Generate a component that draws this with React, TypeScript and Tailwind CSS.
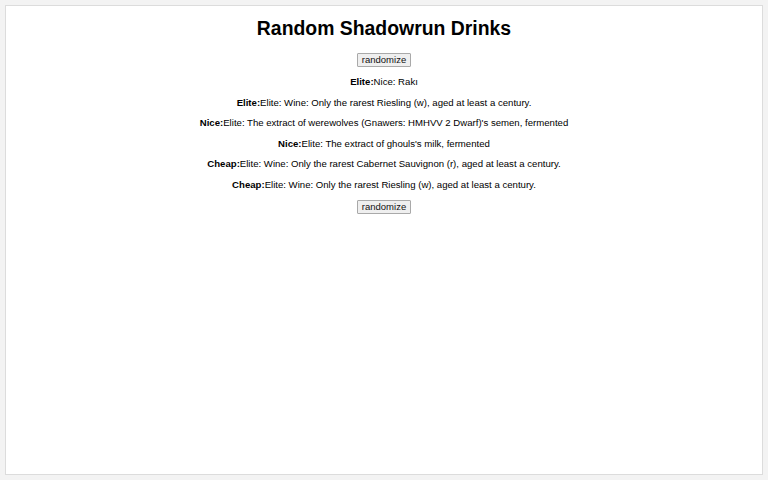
const drinks: [string, string][] = [
  ["Elite:", "Nice: Rakı"],
  ["Elite:", "Elite: Wine: Only the rarest Riesling (w), aged at least a century."],
  ["Nice:", "Elite: The extract of werewolves (Gnawers: HMHVV 2 Dwarf)'s semen, fermented"],
  ["Nice:", "Elite: The extract of ghouls's milk, fermented"],
  ["Cheap:", "Elite: Wine: Only the rarest Cabernet Sauvignon (r), aged at least a century."],
  ["Cheap:", "Elite: Wine: Only the rarest Riesling (w), aged at least a century."],
];

function RandomizeButton() {
  return (
    <button
      type="button"
      className="h-[14px] rounded-[1px] border border-[#a9a9a9] bg-[#efefef] px-[4px] text-[9.5px] leading-[12px] text-[#111]"
    >
      randomize
    </button>
  );
}

export default function App() {
  return (
    <div className="min-h-[480px] bg-[#f3f3f3] p-[5px] font-['Liberation_Sans',Arial,sans-serif] text-black">
      <div className="flex h-[470px] flex-col items-center border border-[#dcdcdc] bg-white">
        <h1 className="mt-[11px] text-[19.4px] font-bold leading-[22px]">Random Shadowrun Drinks</h1>
        <div className="mt-[14px] flex">
          <RandomizeButton />
        </div>
        <div className="mt-[9px] flex flex-col items-center gap-[9px]">
          {drinks.map(([tier, text], i) => (
            <p key={i} className="text-[9.6px] leading-[11.5px]">
              <b>{tier}</b>
              {text}
            </p>
          ))}
        </div>
        <div className="mt-[10px] flex">
          <RandomizeButton />
        </div>
      </div>
    </div>
  );
}
